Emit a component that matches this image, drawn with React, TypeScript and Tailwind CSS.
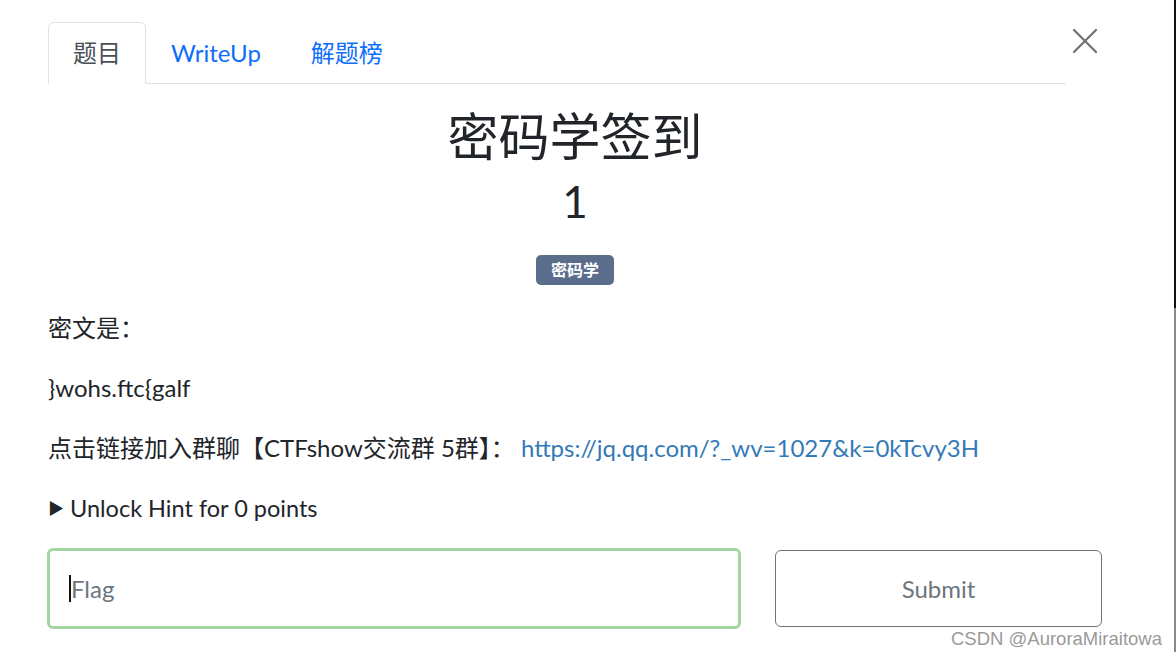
export default function App() {
  return (
    <div className="relative flex w-[1176px] h-[652px] overflow-hidden bg-white text-[#212529] font-['Lato','Noto_Sans_CJK_SC',sans-serif]">
      <div className="flex-1 pl-[48px] pt-[22px]">
        <div className="w-[1054px] flex flex-col">
          {/* tabs + close */}
          <div className="flex items-start">
            <ul className="flex w-[1018px] border-b border-[#dee2e6]">
              <li className="-mb-px h-[62px] px-6 flex items-center border border-[#dee2e6] border-b-white rounded-t-[6px] text-[24px] text-[#495057]">
                题目
              </li>
              <li className="-mb-px h-[62px] px-6 flex items-center border border-transparent text-[24px] text-[#0d6efd]">
                WriteUp
              </li>
              <li className="-mb-px h-[62px] px-6 flex items-center border border-transparent text-[24px] text-[#0d6efd]">
                解题榜
              </li>
            </ul>
            <button className="ml-[6px] mt-[6px] w-[26px] h-[26px]">
              <svg width="26" height="26" viewBox="0 0 26 26" fill="none" stroke="#707070" strokeWidth="2.2" strokeLinecap="round">
                <path d="M2 2 L24 24 M24 2 L2 24" />
              </svg>
            </button>
          </div>

          {/* title */}
          <h1 className="mt-[22px] text-center text-[51px] leading-[62px] font-normal">密码学签到</h1>
          <h3 className="mt-[7px] text-center text-[44px] leading-[53px] font-normal">1</h3>
          <div className="mt-[27px] flex justify-center">
            <span className="h-[30px] px-[15px] flex items-center rounded-[5px] bg-[#5a6e8c] text-white text-[16px] leading-[30px] font-bold">
              密码学
            </span>
          </div>

          {/* description */}
          <div className="mt-[25px] flex flex-col gap-[24px] text-[24px] leading-[36px]">
            <p>密文是：</p>
            <p>{"}wohs.ftc{galf"}</p>
            <p>
              点击链接加入群聊【CTFshow交流群 5群】：{" "}
              <a className="text-[#337ab7]">https://jq.qq.com/?_wv=1027&amp;k=0kTcvy3H</a>
            </p>
            <p className="flex items-center">
              <span className="text-[16px] mr-[6px]">▶</span>
              <span className="text-[23.5px]">Unlock Hint for 0 points</span>
            </p>
          </div>

          {/* flag form */}
          <div className="mt-[22px] -ml-px flex items-center justify-between">
            <div className="w-[694px] h-[81px] flex items-center pl-[19px] border-[3px] border-[#a5d6a1] rounded-[6px] text-[24px] text-[#6c757d]">
              <span className="w-[2px] h-[27px] bg-[#111]" />
              Flag
            </div>
            <button className="w-[327px] h-[77px] border border-[#6c757d] rounded-[6px] text-[24px] text-[#6c757d]">
              Submit
            </button>
          </div>
        </div>
      </div>

      <div className="w-[2px] flex flex-col">
        <div className="h-[308px] bg-[#111]" />
        <div className="flex-1 bg-[#8a8a8a]" />
      </div>

      <span className="absolute right-[14px] top-[625px] text-[18.5px] text-[#9a9a9a] font-['Liberation_Sans',sans-serif]">
        CSDN @AuroraMiraitowa
      </span>
    </div>
  );
}
